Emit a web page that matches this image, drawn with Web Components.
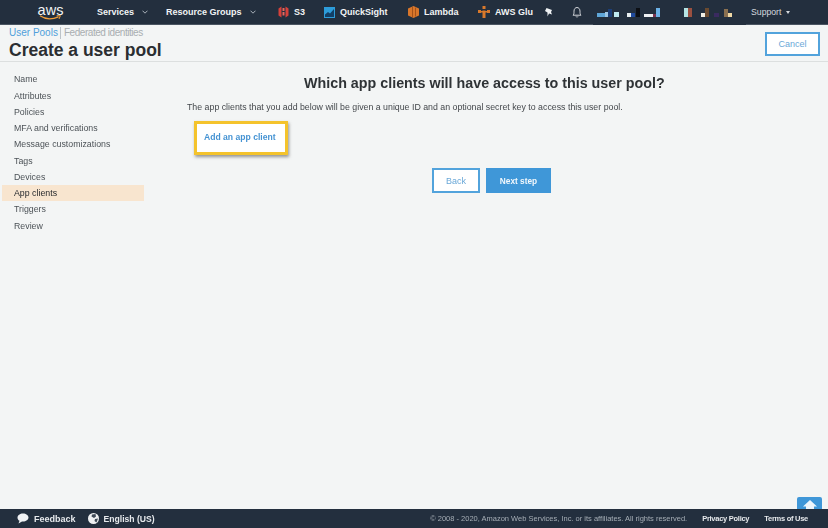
<!DOCTYPE html>
<html>
<head>
<meta charset="utf-8">
<title>Create a user pool</title>
<style>
  html, body { margin: 0; height: 100%; }
  body {
    display: flex;
    flex-direction: column;
    height: 528px;
    overflow: hidden;
    background: #f3f5f5;
    font-family: "Liberation Sans", Arial, sans-serif;
    font-size: 9px;
    filter: blur(.3px);
  }
</style>
</head>
<body>
  <aws-topbar></aws-topbar>
  <pool-header></pool-header>
  <wizard-page>
    <wizard-nav active="App clients"></wizard-nav>
    <client-step></client-step>
  </wizard-page>
  <aws-footer></aws-footer>

<script>
  // 顶部导航
  customElements.define('aws-topbar', class extends HTMLElement {
    constructor() {
      super()
      const chevron = '<svg class="chev" width="6" height="4" viewBox="0 0 6 4"><path d="M.5.7 3 3.2 5.5.7" fill="none" stroke="#aab2bb" stroke-width="1"/></svg>'
      this.attachShadow({ mode: 'open' }).innerHTML = `
        <style>
          :host {
            display: flex;
            align-items: center;
            flex: 0 0 25px;
            height: 25px;
            box-sizing: border-box;
            padding-left: 38px;
            background: #232f3e;
            border-bottom: 1px solid #4a5562;
            color: #f2f4f5;
            font-size: 9px;
            font-weight: 700;
            white-space: nowrap;
            position: relative;
            z-index: 1;
          }
          .logo { display: flex; flex-direction: column; align-items: center; width: 25px; margin-right: 34px; padding-top: 2px; }
          .logo span { font-size: 14.500px; font-weight: 400; line-height: 11px; }
          .logo svg { display: block; margin-top: -1px; }
          .item { display: flex; align-items: center; }
          .chev { margin-left: 8px; }
          .svc svg { margin-right: 5px; }
          .blocks { display: flex; align-items: flex-end; box-sizing: border-box; padding-bottom: 8px; }
          .blocks i { display: block; flex: none; }
          .mask {
            display: flex;
            align-self: stretch;
            margin: 0 0 -1px 11px;
            padding-left: 4px;
            width: 153px;
            box-sizing: border-box;
            background: #232f3e;
          }
          .support { font-weight: 400; color: #d5d9de; margin-left: 5px; font-size: 8.700px; }
          .caret { margin-left: 5px; width: 0; height: 0; border: 2px solid transparent; border-top: 3px solid #d5d9de; border-bottom: 0; }
        </style>
        <div class="logo">
          <span>aws</span>
          <svg width="25" height="6" viewBox="0 0 25 6"><path d="M2 .8C7 4.2 14 4.6 20.5 1.8" fill="none" stroke="#f29d38" stroke-width="1.3"/><path d="M18.6.8 22.4.6 21 4" fill="none" stroke="#f29d38" stroke-width="1"/></svg>
        </div>
        <div class="item" style="width:69px">Services${chevron}</div>
        <div class="item" style="width:112px">Resource Groups${chevron}</div>
        <div class="item svc" style="width:46px">
          <svg width="11" height="12" viewBox="0 0 11 12"><path d="M.5 2.500 3.500.5v11L.5 9.500zM10.500 2.500 7.500.5v11l3-2z" fill="#d6413a"/><path d="M4.500 2h2v3h-2zm0 4h2v3.500h-2z" fill="#e8665c"/></svg>S3
        </div>
        <div class="item svc" style="width:84px">
          <svg width="11" height="11" viewBox="0 0 11 11"><rect width="11" height="11" fill="#2d9ddb"/><path d="M1 10V7.500L4 5l2 1.500L10 2v8z" fill="#123f66"/></svg>QuickSight
        </div>
        <div class="item svc" style="width:70px">
          <svg width="11" height="12" viewBox="0 0 11 12"><path d="M0 2.500 5.500 0 11 2.500v7L5.500 12 0 9.500z" fill="#d9762a"/><path d="M4.500 1v10M7.500 1.500v9" stroke="#a4521a"/></svg>Lambda
        </div>
        <div class="item svc" style="width:67px">
          <svg width="12" height="12" viewBox="0 0 12 12"><path d="M4.500 0h3v3h-3zM0 4h3v3H0zM9 4h3v3H9zM4.500 4.500h3V12h-3zM3 5h2v1.500H3zM7 5h2v1.500H7z" fill="#d9792b"/></svg>AWS Glu
        </div>
        <svg style="margin-right:19px" width="8" height="9" viewBox="0 0 8 9"><path d="M1.500 0 7 2 6 4 7 6.500 4 5.500 2.500 8.500 2.500 4.500 0 3z" fill="#eef1f3"/></svg>
        <svg width="10" height="12" viewBox="0 0 10 12"><path d="M1 9.200c1-1 1-2 1-4C2 3 3.300 1.500 5 1.500S8 3 8 5.200c0 2 0 3 1 4zM4 10.500c.4.800 1.600.8 2 0" fill="none" stroke="#e6e9ec" stroke-width=".9"/></svg>
        <div class="mask">
          <div class="blocks">
            <i style="width:8px;height:4px;background:#5fa6d8"></i><i style="width:3px;height:5px;background:#9fc8e6"></i>
            <i style="width:4px;height:8px;background:#1c3f78;margin-right:2px"></i><i style="width:5px;height:5px;background:#bfeaf0;margin-right:8px"></i>
            <i style="width:4px;height:4px;background:#e8eef0"></i><i style="width:4px;height:4px;background:#1f4a9c;margin-right:1px"></i>
            <i style="width:4px;height:9px;background:#0c0f14;margin-right:4px"></i>
            <i style="width:9px;height:3px;background:#eef1f3"></i><i style="width:3px;height:3px;background:#7a3450"></i><i style="width:4px;height:9px;background:#6cb2e8"></i>
          </div>
          <div class="blocks" style="margin-left:24px">
            <i style="width:4px;height:9px;background:#b5e4e4"></i><i style="width:4px;height:9px;background:#9a5040;margin-right:9px"></i>
            <i style="width:4px;height:4px;background:#f0ede4"></i><i style="width:4px;height:9px;background:#6a4a30;margin-right:5px"></i>
            <i style="width:5px;height:4px;background:#3a2a60;margin-right:5px"></i>
            <i style="width:4px;height:8px;background:#8a7050"></i><i style="width:4px;height:4px;background:#f0d9a6"></i>
          </div>
        </div>
        <span class="support">Support</span><span class="caret"></span>
      `
    }
  })

  // 通用按钮
  customElements.define('aws-button', class extends HTMLElement {
    constructor() {
      super()
      this.attachShadow({ mode: 'open' }).innerHTML = `
        <style>
          :host {
            display: inline-flex;
            align-items: center;
            justify-content: center;
            box-sizing: border-box;
            height: 25px;
            border: 2px solid #52a3dc;
            background: #fff;
            color: #6aa8d8;
            font-size: 9px;
          }
          :host([primary]) { background: #3f97d8; border-color: #3f97d8; color: #f2f8fc; font-weight: 700; font-size: 8.300px; }
        </style>
        <slot></slot>
      `
    }
  })

  // 标题区
  customElements.define('pool-header', class extends HTMLElement {
    constructor() {
      super()
      this.attachShadow({ mode: 'open' }).innerHTML = `
        <style>
          :host {
            display: flex;
            justify-content: space-between;
            flex: 0 0 37px;
            box-sizing: border-box;
            height: 37px;
            padding: 2px 8px 0 9px;
            border-bottom: 1px solid #dcdfdf;
            background: #f3f5f5;
          }
          .links { display: flex; font-size: 10px; line-height: 12px; }
          .links a { color: #4f9fdb; padding-right: 2px; border-right: 1px solid #bcc3c8; }
          .links span { color: #a9aeb1; padding-left: 3px; letter-spacing: -.45px; }
          h1 { margin: 1px 0 0; font-size: 17.500px; line-height: 21px; font-weight: 700; color: #2b2e31; white-space: nowrap; }
          aws-button { width: 55px; height: 24px; margin-top: 5px; }
        </style>
        <div>
          <div class="links"><a>User Pools</a><span>Federated identities</span></div>
          <h1>Create a user pool</h1>
        </div>
        <aws-button>Cancel</aws-button>
      `
    }
  })

  // 页面主体
  customElements.define('wizard-page', class extends HTMLElement {
    constructor() {
      super()
      this.attachShadow({ mode: 'open' }).innerHTML = `
        <style>
          :host { display: flex; flex: 1; min-height: 0; position: relative; }
          .top {
            position: absolute;
            right: 6px;
            bottom: 0;
            width: 25px;
            height: 12px;
            overflow: hidden;
            border-radius: 2px 2px 0 0;
            background: #3f97d8;
          }
          .top svg { display: block; margin: 3px auto 0; }
        </style>
        <slot></slot>
        <div class="top"><svg width="14" height="10" viewBox="0 0 14 10"><path d="M7 0 14 6.500H11V10H3V6.500H0z" fill="#eef6fb"/></svg></div>
      `
    }
  })

  // 向导步骤
  customElements.define('wizard-nav', class extends HTMLElement {
    constructor() {
      super()
      const steps = ['Name', 'Attributes', 'Policies', 'MFA and verifications', 'Message customizations', 'Tags', 'Devices', 'App clients', 'Triggers', 'Review']
      const active = this.getAttribute('active')
      this.attachShadow({ mode: 'open' }).innerHTML = `
        <style>
          :host { display: block; flex: 0 0 142px; margin-left: 2px; padding-top: 9.300px; color: #4c5257; font-size: 8.800px; }
          div { height: 16.250px; line-height: 16.250px; padding-left: 12px; white-space: nowrap; }
          .on { background: #f8e5cf; color: #26292c; }
        </style>
        ${steps.map(s => `<div class="${s === active ? 'on' : ''}">${s}</div>`).join('')}
      `
    }
  })

  // 应用客户端步骤
  customElements.define('client-step', class extends HTMLElement {
    constructor() {
      super()
      this.attachShadow({ mode: 'open' }).innerHTML = `
        <style>
          :host { display: block; flex: 1; padding: 11px 0 0 43px; color: #44484c; font-size: 8.800px; }
          h2 { margin: 0 0 0 117px; font-size: 14.300px; line-height: 20px; font-weight: 700; color: #2f3336; white-space: nowrap; }
          p { margin: 9px 0 0; line-height: 11px; white-space: nowrap; }
          .add {
            display: flex;
            align-items: center;
            box-sizing: border-box;
            width: 94px;
            height: 34px;
            margin: 8px 0 0 7px;
            padding: 0 0 3px 7px;
            border: 3px solid #f4c32c;
            background: #fff;
            box-shadow: 1px 2px 3px rgba(70, 70, 70, .55);
            color: #4593d3;
            font-size: 8.600px;
            font-weight: 700;
          }
          .nav { display: flex; gap: 6px; margin: 13px 0 0 245px; }
          .back { width: 48px; }
          .next { width: 65px; }
        </style>
        <h2>Which app clients will have access to this user pool?</h2>
        <p>The app clients that you add below will be given a unique ID and an optional secret key to access this user pool.</p>
        <div class="add">Add an app client</div>
        <div class="nav">
          <aws-button class="back">Back</aws-button>
          <aws-button class="next" primary>Next step</aws-button>
        </div>
      `
    }
  })

  // 底部栏
  customElements.define('aws-footer', class extends HTMLElement {
    constructor() {
      super()
      this.attachShadow({ mode: 'open' }).innerHTML = `
        <style>
          :host {
            display: flex;
            align-items: center;
            flex: 0 0 19px;
            height: 19px;
            padding: 0 20px 0 17px;
            background: #232f3e;
            color: #e6e9ec;
            font-size: 9px;
            font-weight: 700;
            white-space: nowrap;
            position: relative;
            z-index: 1;
          }
          svg { margin-right: 5px; }
          .lang { margin-left: 12px; }
          .en { font-size: 8.600px; }
          .copy { margin-left: auto; margin-right: 15px; color: #a5adb5; font-weight: 400; font-size: 7.500px; }
          .terms { margin-left: 15px; }
          a { font-size: 7.500px; letter-spacing: -.27px; }
        </style>
        <svg width="12" height="11" viewBox="0 0 12 11"><path d="M6 .5c3 0 5.500 1.700 5.500 4S9 8.500 6 8.500H5L1.500 10.500 2.500 7.800C1 7 .5 5.800.5 4.500.5 2.200 3 .5 6 .5z" fill="#f0f2f4"/></svg>
        <span>Feedback</span>
        <svg class="lang" width="11" height="11" viewBox="0 0 11 11"><circle cx="5.500" cy="5.500" r="5.500" fill="#eef0f2"/><path d="M4 1.500 7.500 1 8 3.500 6 5 3.500 3.500zM7 6l3-.5L8.500 9.500 6.500 8z" fill="#3f4a57"/></svg>
        <span class="en">English (US)</span>
        <span class="copy">© 2008 - 2020, Amazon Web Services, Inc. or its affiliates. All rights reserved.</span>
        <a>Privacy Policy</a>
        <a class="terms">Terms of Use</a>
      `
    }
  })
</script>
</body>
</html>
